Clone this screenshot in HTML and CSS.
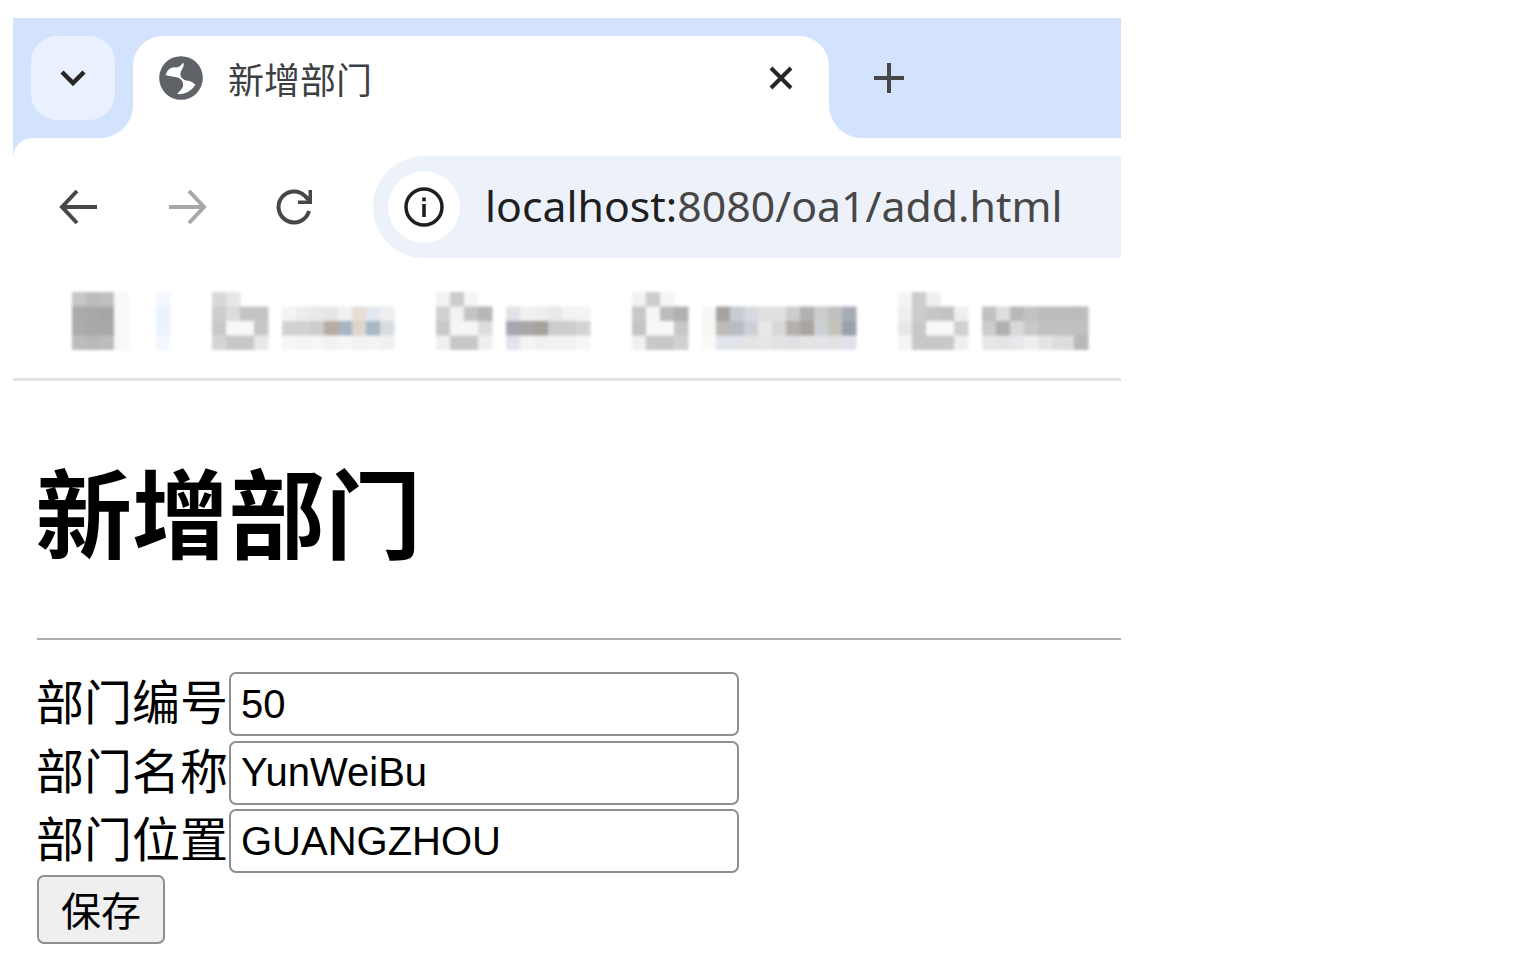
FILE: index.html
```html
<!DOCTYPE html>
<html lang="zh-CN">
<head>
  <meta charset="UTF-8" />
  <title>新增部门</title>
  <link rel="stylesheet" href="styles.css">
</head>
<body>

  <div class="janela">
    <!-- Abas -->
    <div class="tabstrip">
      <button class="tab-menu">
        <svg width="28" height="28" viewBox="0 0 28 28"><path class="icon-line dark bold" d="M3 8l11 11 11-11"/></svg>
      </button>
      <div class="tab">
        <svg class="globe" width="44" height="44" viewBox="27 18 133 133">
          <circle cx="93.500" cy="84.500" r="66" fill="#5f6368"/>
          <path fill="#fff" d="M100 38C90 50 85 55 75 52C62 50 50 62 47 76L80 82C95 85 100 95 100 105C100 118 90 122 82 133C102 136 125 125 137 105C128 95 118 92 108 92C98 88 90 80 92 70C94 58 106 52 100 38Z"/>
        </svg>
        <span class="tab-title">新增部门</span>
        <svg class="tab-close" width="28" height="28" viewBox="0 0 28 28"><path class="icon-line dark" d="M4 4l20 20M24 4L4 24"/></svg>
      </div>
      <svg class="tab-new" width="34" height="34" viewBox="0 0 34 34"><path class="icon-line grey" d="M17 2v30M2 17h30"/></svg>
    </div>

    <!-- Barra de endereço -->
    <div class="toolbar">
      <button class="nav-btn">
        <svg width="40" height="36" viewBox="0 0 40 36"><path class="icon-line grey" d="M38 18H3M18 2L3 18l15 16"/></svg>
      </button>
      <button class="nav-btn">
        <svg width="40" height="36" viewBox="0 0 40 36"><path class="icon-line light" d="M2 18h35M22 2l15 16-15 16"/></svg>
      </button>
      <button class="nav-btn">
        <svg width="40" height="40" viewBox="0 0 40 40"><path class="icon-line grey" d="M34 24a15.500 15.500 0 1 1-3.500-14.500L35 14"/><path fill="#474747" d="M37 3v14H23v-3.500h10.500V3z"/></svg>
      </button>
      <div class="omnibox">
        <span class="site-info">
          <svg width="40" height="40" viewBox="0 0 40 40">
            <circle cx="20" cy="20" r="18" fill="none" stroke="#1f1f1f" stroke-width="3.500"/>
            <rect x="18.200" y="17" width="3.600" height="13" fill="#1f1f1f"/>
            <rect x="18.200" y="10.500" width="3.600" height="3.800" fill="#1f1f1f"/>
          </svg>
        </span>
        <span class="url"><b>localhost:</b>8080/oa1/add.html</span>
      </div>
    </div>

    <!-- Favoritos (borrados na captura) -->
    <div class="bookmarks">
      <svg class="mosaico" width="1022" height="58" viewBox="0 0 1022 58">
        <g>
          <rect x="0" fill="#c6c6c6"/><rect x="14" fill="#bcbcbc"/><rect x="28" fill="#c0c0c0"/><rect x="42" fill="#f8f8f8"/><rect x="84" fill="#f3f7fe"/>
          <rect x="140" fill="#d8d8d8"/><rect x="154" fill="#e6e6e6"/>
          <rect x="364" fill="#f2f2f2"/><rect x="378" fill="#cccccc"/><rect x="392" fill="#f5f5f5"/>
          <rect x="560" fill="#f2f2f2"/><rect x="574" fill="#cccccc"/><rect x="588" fill="#f5f5f5"/>
          <rect x="826" fill="#f4f4f4"/><rect x="840" fill="#cccccc"/><rect x="854" fill="#eeeeee"/>
        </g>
        <g transform="translate(0 14.500)">
          <rect x="0" fill="#aaaaaa"/><rect x="14" fill="#a8a8a8"/><rect x="28" fill="#a6a6a6"/><rect x="42" fill="#f8f8f8"/><rect x="84" fill="#ebf2fe"/>
          <rect x="140" fill="#cccccc"/><rect x="154" fill="#dcdcdc"/><rect x="168" fill="#c4c4c4"/><rect x="182" fill="#c4c4c4"/>
          <rect x="210" fill="#f4f3f2"/><rect x="224" fill="#ececec"/><rect x="238" fill="#e8e8e8"/><rect x="252" fill="#e6e6e6"/><rect x="266" fill="#f0f0f0"/><rect x="280" fill="#e6ded4"/><rect x="294" fill="#e2e8f0"/><rect x="308" fill="#eeeeee"/>
          <rect x="364" fill="#d0d0d0"/><rect x="378" fill="#f2f2f2"/><rect x="392" fill="#c4c4c4"/><rect x="406" fill="#b6b6b6"/>
          <rect x="434" fill="#e2e2e8"/><rect x="448" fill="#f0f0f0"/><rect x="462" fill="#eeeeee"/><rect x="476" fill="#e8e8e8"/><rect x="490" fill="#f2f2f2"/><rect x="504" fill="#f4f4f4"/>
          <rect x="560" fill="#c8c8c8"/><rect x="574" fill="#f6f6f6"/><rect x="588" fill="#bcbcbc"/><rect x="602" fill="#b0b0b0"/>
          <rect x="630" fill="#f6f6f4"/><rect x="644" fill="#a8a2a2"/><rect x="658" fill="#c8ccd2"/><rect x="672" fill="#d6dadf"/><rect x="686" fill="#e0e0e0"/><rect x="700" fill="#e0e0e0"/><rect x="714" fill="#cccccc"/><rect x="728" fill="#b2b0b0"/><rect x="742" fill="#cccccc"/><rect x="756" fill="#c0c0c0"/><rect x="770" fill="#a8acb6"/>
          <rect x="826" fill="#eeeeee"/><rect x="840" fill="#cccccc"/><rect x="854" fill="#c6c6c6"/><rect x="868" fill="#c2c2c2"/><rect x="882" fill="#eeeeee"/>
          <rect x="910" fill="#c0c0c0"/><rect x="924" fill="#dedede"/><rect x="938" fill="#b8b8b8"/><rect x="952" fill="#c2c2c2"/><rect x="966" fill="#bcbcbc"/><rect x="980" fill="#bcbcbc"/><rect x="994" fill="#bcbcbc"/><rect x="1002" fill="#bcbcbc"/>
        </g>
        <g transform="translate(0 29)">
          <rect x="0" fill="#acacac"/><rect x="14" fill="#a8a8a8"/><rect x="28" fill="#a8a8a8"/><rect x="42" fill="#f8f8f8"/><rect x="84" fill="#ebf2fe"/>
          <rect x="140" fill="#c8c8c8"/><rect x="154" fill="#f8f8f8"/><rect x="168" fill="#f8f8f8"/><rect x="182" fill="#c6c6c6"/>
          <rect x="210" fill="#d2d2d2"/><rect x="224" fill="#d2d2d2"/><rect x="238" fill="#cccccc"/><rect x="252" fill="#b8aca0"/><rect x="266" fill="#a8b4c2"/><rect x="280" fill="#dcd6cc"/><rect x="294" fill="#a8b6c4"/><rect x="308" fill="#d8dce0"/>
          <rect x="364" fill="#c8c8c8"/><rect x="378" fill="#f6f6f6"/><rect x="392" fill="#f6f6f6"/><rect x="406" fill="#dddddd"/>
          <rect x="434" fill="#a8a6b2"/><rect x="448" fill="#a8a6a8"/><rect x="462" fill="#a8a09c"/><rect x="476" fill="#cccccc"/><rect x="490" fill="#cccccc"/><rect x="504" fill="#d4d4d4"/>
          <rect x="560" fill="#c4c4c4"/><rect x="574" fill="#f8f8f8"/><rect x="588" fill="#f8f8f8"/><rect x="602" fill="#c8c8c8"/>
          <rect x="630" fill="#f6f6f4"/><rect x="644" fill="#c0bab4"/><rect x="658" fill="#b8bcc4"/><rect x="672" fill="#ccd0d4"/><rect x="686" fill="#e8e8e8"/><rect x="700" fill="#d8d8d8"/><rect x="714" fill="#b4b0ac"/><rect x="728" fill="#a8a4a0"/><rect x="742" fill="#ccd0d4"/><rect x="756" fill="#c4c4bc"/><rect x="770" fill="#9ca0ac"/>
          <rect x="826" fill="#e8e8e8"/><rect x="840" fill="#c8c8c8"/><rect x="854" fill="#f8f8f8"/><rect x="868" fill="#f8f8f8"/><rect x="882" fill="#d0d0d0"/>
          <rect x="910" fill="#cccccc"/><rect x="924" fill="#b0b0b0"/><rect x="938" fill="#d8d8d8"/><rect x="952" fill="#c8c8c8"/><rect x="966" fill="#c0c0c0"/><rect x="980" fill="#c0c0c0"/><rect x="994" fill="#c0c0c0"/><rect x="1002" fill="#c0c0c0"/>
        </g>
        <g transform="translate(0 43.500)">
          <rect x="0" fill="#bcbcbc"/><rect x="14" fill="#b8b8b8"/><rect x="28" fill="#bcbcbc"/><rect x="42" fill="#f8f8f8"/><rect x="84" fill="#f3f7fe"/>
          <rect x="140" fill="#d4d4d4"/><rect x="154" fill="#c8c8c8"/><rect x="168" fill="#c8c8c8"/><rect x="182" fill="#e8e8e8"/>
          <rect x="210" fill="#f6f6f6"/><rect x="224" fill="#f2f4f6"/><rect x="238" fill="#f6f6f6"/><rect x="252" fill="#f2f2f2"/><rect x="266" fill="#f6f6f6"/><rect x="280" fill="#f2f2f2"/><rect x="294" fill="#f4f4f6"/><rect x="308" fill="#f0f0f0"/>
          <rect x="364" fill="#f0f0f0"/><rect x="378" fill="#c8c8c8"/><rect x="392" fill="#c8c8c8"/><rect x="406" fill="#efefef"/>
          <rect x="434" fill="#e2e4ec"/><rect x="448" fill="#f4f4f4"/><rect x="462" fill="#f0f0f0"/><rect x="476" fill="#f2f2f2"/><rect x="490" fill="#f2f2f2"/><rect x="504" fill="#f6f6f6"/>
          <rect x="560" fill="#f0f0f0"/><rect x="574" fill="#c8c8c8"/><rect x="588" fill="#c8c8c8"/><rect x="602" fill="#d0d0d0"/>
          <rect x="630" fill="#fafaf8"/><rect x="644" fill="#e0e4ec"/><rect x="658" fill="#e2e4ea"/><rect x="672" fill="#e4e4e4"/><rect x="686" fill="#e6e6e6"/><rect x="700" fill="#e2e2e2"/><rect x="714" fill="#e0e0e4"/><rect x="728" fill="#e4e4e4"/><rect x="742" fill="#e2e4e8"/><rect x="756" fill="#e2e2e2"/><rect x="770" fill="#dfe2ea"/>
          <rect x="826" fill="#f4f4f4"/><rect x="840" fill="#c8c8c8"/><rect x="854" fill="#c8c8c8"/><rect x="868" fill="#c8c8c8"/><rect x="882" fill="#efefef"/>
          <rect x="910" fill="#e6e6e6"/><rect x="924" fill="#e4e4e4"/><rect x="938" fill="#e8e8ec"/><rect x="952" fill="#eeeeee"/><rect x="966" fill="#e4e4e4"/><rect x="980" fill="#dcdcdc"/><rect x="994" fill="#dcdcdc"/><rect x="1002" fill="#b8b8b8"/>
        </g>
      </svg>
    </div>

    <!-- Conteúdo da página -->
    <div class="conteudo">
      <h1>新增部门</h1>
      <hr>
      <form>
        <div class="linha"><label>部门编号</label><input type="text" value="50"></div>
        <div class="linha"><label>部门名称</label><input type="text" value="YunWeiBu"></div>
        <div class="linha"><label>部门位置</label><input type="text" value="GUANGZHOU"></div>
        <button class="salvar" type="button">保存</button>
      </form>
    </div>
  </div>

</body>
</html>
```

FILE: styles.css
```css
/* Geral */
html, body {
  height: 100%;
}

body {
  margin: 0;
  padding: 18px 0 0 13px;
  box-sizing: border-box;
  background: #fff;
  color: #000;
  font-family: "Liberation Sans", "Noto Sans CJK SC", sans-serif;
  overflow: hidden;
}

.janela {
  width: 1108px;
}

button {
  border: none;
  background: none;
  padding: 0;
  font: inherit;
}

.icon-line {
  fill: none;
  stroke-width: 4px;
}

.icon-line.bold { stroke-width: 4.500px; }
.icon-line.dark { stroke: #262626; }
.icon-line.grey { stroke: #474747; }
.icon-line.light { stroke: #a8a8a8; }

/* Abas */
.tabstrip {
  height: 140px;
  margin-bottom: -20px;
  padding: 18px 0 0 18px;
  box-sizing: border-box;
  display: flex;
  align-items: flex-start;
  background: #d3e3fd;
}

.tab-menu {
  width: 84px;
  height: 84px;
  border-radius: 26px;
  background: #e9f1fe;
  display: flex;
  align-items: center;
  justify-content: center;
}

.tab {
  position: relative;
  width: 696px;
  height: 102px;
  margin-left: 18px;
  padding: 20px 34px 0 26px;
  box-sizing: border-box;
  display: flex;
  align-items: flex-start;
  background: #fff;
  border-radius: 30px 30px 0 0;
}

/* cantos côncavos da aba */
.tab::before,
.tab::after {
  content: "";
  position: absolute;
  bottom: 0;
  width: 33px;
  height: 33px;
}

.tab::before {
  left: -33px;
  background: radial-gradient(circle at 0 0, transparent 32.500px, #fff 33.500px);
}

.tab::after {
  right: -33px;
  background: radial-gradient(circle at 100% 0, transparent 32.500px, #fff 33.500px);
}

.tab-title {
  margin-left: 25px;
  color: #3c4043;
  font-size: 36px;
  line-height: 52px;
}

.tab-close {
  margin: 8px 0 0 auto;
}

.tab-new {
  margin: 25px 0 0 43px;
}

/* Barra de endereço */
.toolbar {
  position: relative;
  height: 136px;
  padding: 18px 0 0 12px;
  box-sizing: border-box;
  display: flex;
  align-items: flex-start;
  background: #fff;
  border-radius: 20px 0 0 0;
}

.nav-btn {
  width: 108px;
  height: 102px;
  display: flex;
  align-items: center;
  justify-content: center;
}

.omnibox {
  flex: 1;
  height: 102px;
  margin-left: 24px;
  padding-left: 15px;
  display: flex;
  align-items: center;
  background: #edf2fa;
  border-radius: 51px 0 0 51px;
}

.site-info {
  width: 72px;
  height: 72px;
  display: flex;
  align-items: center;
  justify-content: center;
  background: #fff;
  border-radius: 50%;
}

.url {
  margin: 0 0 4px 25px;
  color: #474747;
  font-family: "Noto Sans", sans-serif;
  font-size: 42.800px;
  white-space: nowrap;
}

.url b {
  color: #1f1f1f;
  font-weight: normal;
}

/* Favoritos */
.bookmarks {
  height: 86px;
  padding: 18px 0 0 59px;
  border-bottom: 3px solid #e2e4e2;
}

.mosaico {
  display: block;
  filter: blur(1.500px);
}

.mosaico rect {
  width: 14.500px;
  height: 15px;
}

/* Conteúdo */
.conteudo {
  padding-left: 24px;
}

h1 {
  margin: 65px 0 0 -1.500px;
  font-size: 96.500px;
  font-weight: bold;
  line-height: 144px;
}

hr {
  height: 2px;
  margin: 48px 0 30px;
  border: none;
  background: #aeaeae;
}

.linha {
  display: flex;
  align-items: center;
  height: 68.500px;
}

.linha label {
  width: 192px;
  margin-left: -1px;
  margin-right: 1px;
  font-size: 48px;
  line-height: 1;
}

.linha input {
  width: 510px;
  height: 64px;
  padding: 0 10px;
  box-sizing: border-box;
  border: 2px solid #8f8f8f;
  border-radius: 7px;
  font-family: "Liberation Sans", sans-serif;
  font-size: 40px;
  color: #000;
}

.salvar {
  display: block;
  width: 128px;
  height: 69px;
  margin-top: -1px;
  box-sizing: border-box;
  border: 2px solid #8f8f8f;
  border-radius: 7px;
  background: #efefef;
  font-size: 40px;
  color: #000;
}
```
